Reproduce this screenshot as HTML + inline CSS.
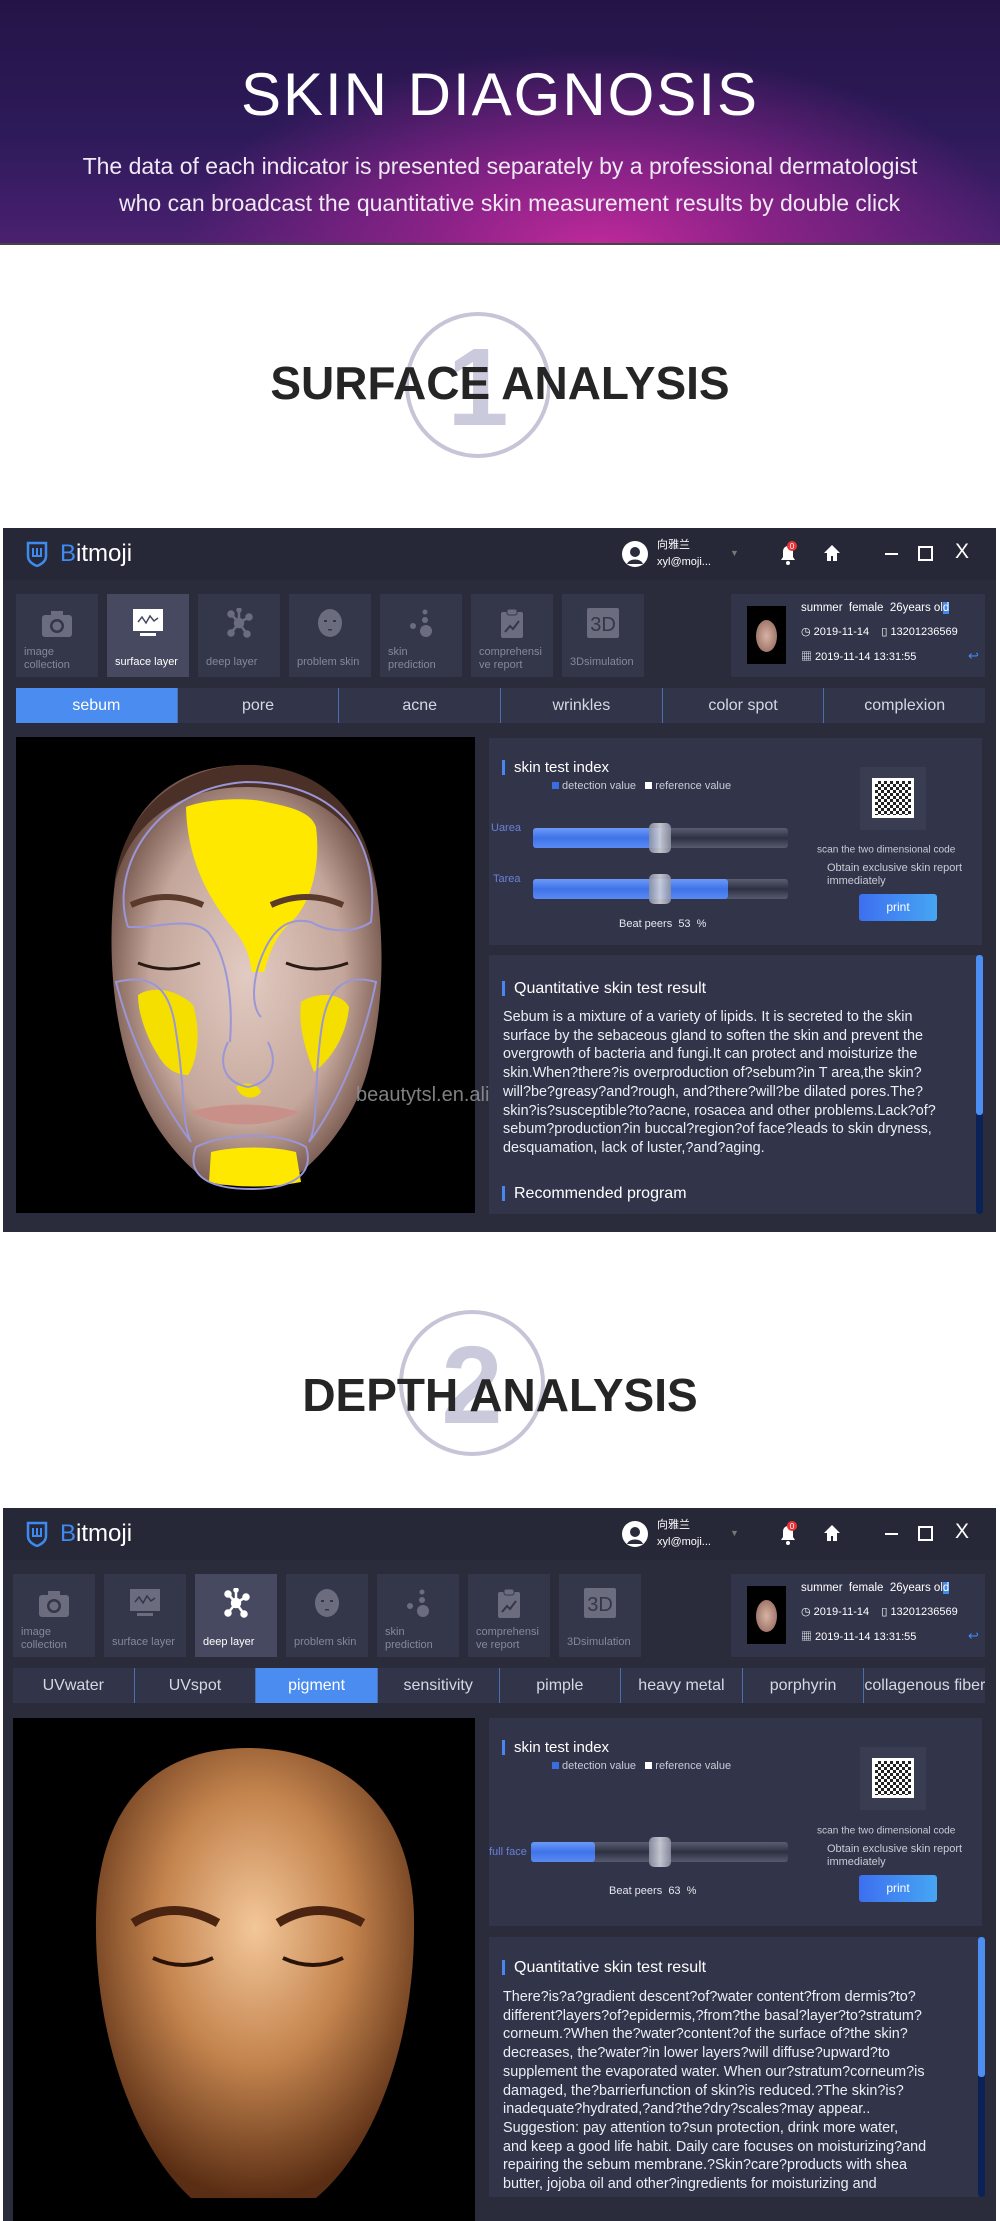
<!DOCTYPE html>
<html><head><meta charset="utf-8">
<style>
*{margin:0;padding:0;box-sizing:border-box}
body{width:1000px;height:2221px;background:#fff;font-family:"Liberation Sans","Noto Sans CJK SC",sans-serif;position:relative;overflow:hidden}
.abs{position:absolute}
.banner{left:0;top:0;width:1000px;height:245px;background:radial-gradient(ellipse 420px 200px at 600px 250px,#c02a9a 0%,#8a2288 40%,rgba(60,25,110,0) 100%),linear-gradient(180deg,#241446 0%,#2d1a5a 55%,#4a2070 100%);border-bottom:2px solid #444}
.banner h1{position:absolute;left:0;width:1000px;top:60px;text-align:center;color:#fff;font-weight:normal;font-size:60px;letter-spacing:2px}
.banner p{position:absolute;left:0;width:1000px;text-align:center;color:#f0e8f4;font-size:23px}
.sec{font-size:46px;font-weight:bold;color:#252525;letter-spacing:0px;width:1000px;text-align:center;left:0}
.app{left:3px;width:993px;background:#2a2c3c;overflow:hidden}
.tb{left:0;top:0;width:993px;height:52px;background:#262837}
.tile{width:82px;height:83px;top:66px;background:#34364a;color:#85879a;font-size:11px}
.tile.on{background:#46495f;color:#fff}
.tile .lb{position:absolute;left:8px;bottom:5px;line-height:13px}
.tile svg{position:absolute;left:25px;top:14px}
.tabs{top:160px;left:13px;width:969px;height:35px;background:#32354a;display:flex}
.tabs div{flex:1;color:#d5d7e2;font-size:16px;text-align:center;line-height:35px;border-left:1px solid #4a6fb0;white-space:nowrap;overflow:hidden}
.tabs div:first-child{border-left:none}
.tabs div.on{background:#4a8cef;color:#fff}
.pan{background:#32344a}
.hd{font-size:15px;color:#fff;border-left:3px solid #4a86f0;padding-left:9px;line-height:15px}
.bar{height:20px;border-radius:3px;background:linear-gradient(180deg,#5a5e72,#2e3142 50%,#555a6e);}
.fill{height:20px;border-radius:3px;background:linear-gradient(180deg,#6d9af8,#3f73e8 50%,#5a8af2)}
.thumb{width:22px;height:30px;border-radius:5px;background:linear-gradient(90deg,#8c90a2,#d0d2dc 50%,#8c90a2);opacity:.9}
.small{color:#c9cbd6;font-size:11px}
.body{color:#eceef4;font-size:14.4px;line-height:18.7px;white-space:nowrap}
</style></head><body>

<div class="abs banner">
<h1>SKIN DIAGNOSIS</h1>
<p style="top:153px">The data of each indicator is presented separately by a professional dermatologist</p>
<p style="top:190px">&nbsp;&nbsp;&nbsp;who can broadcast the quantitative skin measurement results by double click</p>
</div>

<svg class="abs" style="left:400px;top:310px" width="150" height="150"><circle cx="78" cy="75" r="71" fill="none" stroke="#c6c4d6" stroke-width="4"/><text x="78" y="115" text-anchor="middle" font-size="110" font-weight="bold" fill="#cbc9dc" font-family="Liberation Sans">1</text></svg>
<div class="abs sec" style="top:356px">SURFACE ANALYSIS</div>

<svg class="abs" style="left:397px;top:1310px" width="150" height="150"><circle cx="75" cy="73" r="71" fill="none" stroke="#c6c4d6" stroke-width="4"/><text x="75" y="113" text-anchor="middle" font-size="110" font-weight="bold" fill="#cbc9dc" font-family="Liberation Sans">2</text></svg>
<div class="abs sec" style="top:1368px">DEPTH ANALYSIS</div>

<!-- APP 1 -->
<div class="abs app" style="top:528px;height:704px">
 <div class="abs tb">
  <svg class="abs" style="left:22px;top:13px" width="24" height="26"><path d="M3 2h18v13c0 5-4 8-9 10-5-2-9-5-9-10z" fill="none" stroke="#3d8bf0" stroke-width="2.5"/><path d="M8 7v8h8V7M12 7v8" fill="none" stroke="#3d8bf0" stroke-width="2"/></svg>
  <div class="abs" style="left:57px;top:12px;font-size:24px;color:#fff"><span style="color:#3d8bf0">B</span>itmoji</div>
  <svg class="abs" style="left:619px;top:13px" width="26" height="26"><circle cx="13" cy="13" r="13" fill="#fff"/><circle cx="13" cy="11" r="5" fill="#2a2c3c"/><path d="M5 23c2-6 14-6 16 0z" fill="#2a2c3c"/></svg>
  <div class="abs" style="left:654px;top:9px;font-size:11px;color:#fff;line-height:17px">向雅兰<br>xyl@moji...</div>
  <div class="abs" style="left:727px;top:20px;color:#777;font-size:9px">▼</div>
  <svg class="abs" style="left:775px;top:12px" width="20" height="26"><path d="M3 20h14l-2-3V11a5 5 0 0 0-10 0v6z" fill="#fff"/><circle cx="10" cy="23" r="2" fill="#fff"/><circle cx="14" cy="6" r="5" fill="#e33"/><text x="14" y="9" font-size="8" fill="#fff" text-anchor="middle">0</text></svg>
  <svg class="abs" style="left:820px;top:16px" width="18" height="18"><path d="M9 1L1 9h3v8h4v-5h2v5h4V9h3z" fill="#fff"/></svg>
  <div class="abs" style="left:882px;top:25px;width:13px;height:2px;background:#fff"></div>
  <div class="abs" style="left:915px;top:18px;width:15px;height:15px;border:2px solid #fff"></div>
  <div class="abs" style="left:952px;top:12px;color:#fff;font-size:21px">X</div>
 </div>
 <div class="abs tile" style="left:13px"><svg width="32" height="30"><rect x="1" y="7" width="30" height="22" rx="3" fill="#6b6d7e"/><rect x="10" y="3" width="12" height="6" fill="#6b6d7e"/><circle cx="16" cy="18" r="7" fill="#34364a"/><circle cx="16" cy="18" r="4.5" fill="#6b6d7e"/></svg><div class="lb">image<br>collection</div></div>
 <div class="abs tile on" style="left:104px"><svg width="32" height="30"><rect x="1" y="1" width="30" height="22" fill="#fff"/><path d="M6 14l4-5 4 6 4-7 4 5 4-3" stroke="#46495f" stroke-width="1.5" fill="none"/><rect x="8" y="25" width="16" height="3" fill="#fff"/></svg><div class="lb" style="bottom:8px">surface layer</div></div>
 <div class="abs tile" style="left:195px"><svg width="32" height="30"><g fill="#6b6d7e" stroke="#6b6d7e" stroke-width="2.5"><line x1="16" y1="15" x2="8" y2="6"/><line x1="16" y1="15" x2="26" y2="9"/><line x1="16" y1="15" x2="8" y2="25"/><line x1="16" y1="15" x2="24" y2="26"/><line x1="16" y1="15" x2="16" y2="2"/><circle cx="16" cy="15" r="4"/><circle cx="8" cy="6" r="2.5"/><circle cx="26" cy="9" r="2.5"/><circle cx="8" cy="25" r="2.5"/><circle cx="24" cy="26" r="2.5"/><circle cx="16" cy="2" r="1.5"/></g></svg><div class="lb" style="bottom:8px">deep layer</div></div>
 <div class="abs tile" style="left:286px"><svg width="32" height="30"><ellipse cx="16" cy="15" rx="12" ry="14" fill="#6b6d7e"/><rect x="10" y="12" width="3" height="2" fill="#34364a"/><rect x="19" y="12" width="3" height="2" fill="#34364a"/><rect x="14" y="21" width="4" height="1.5" fill="#34364a"/></svg><div class="lb" style="bottom:8px">problem skin</div></div>
 <div class="abs tile" style="left:377px"><svg width="32" height="30"><circle cx="20" cy="4" r="2.5" fill="#6b6d7e"/><circle cx="20" cy="12" r="3" fill="#6b6d7e"/><circle cx="8" cy="18" r="3" fill="#6b6d7e"/><circle cx="21" cy="23" r="6" fill="#6b6d7e"/></svg><div class="lb">skin<br>prediction</div></div>
 <div class="abs tile" style="left:468px"><svg width="32" height="30"><rect x="5" y="4" width="22" height="26" rx="2" fill="#6b6d7e"/><rect x="11" y="1" width="10" height="6" rx="2" fill="#6b6d7e" stroke="#34364a"/><path d="M9 24l5-6 3 3 6-8" stroke="#34364a" stroke-width="2" fill="none"/></svg><div class="lb">comprehensi<br>ve report</div></div>
 <div class="abs tile" style="left:559px"><svg width="32" height="30"><rect x="0" y="0" width="32" height="30" rx="2" fill="#6b6d7e"/><text x="16" y="23" font-size="20" fill="#34364a" text-anchor="middle" font-family="Liberation Sans">3D</text></svg><div class="lb" style="bottom:8px">3Dsimulation</div></div>
 <div class="abs" style="left:728px;top:66px;width:254px;height:83px;background:#32344a">
  <div class="abs" style="left:16px;top:12px;width:39px;height:58px;background:#000"><div style="margin:14px 9px;width:21px;height:32px;border-radius:50%;background:radial-gradient(#d7b3a5,#8a6054)"></div></div>
  <div class="abs small" style="left:70px;top:8px;color:#fff;font-size:11.5px;white-space:nowrap">summer &nbsp;female &nbsp;26years ol<span style="background:#3d8bf0">d</span></div>
  <div class="abs small" style="left:70px;top:31px;color:#fff;white-space:nowrap">◷ 2019-11-14 &nbsp;&nbsp;&nbsp;▯ 13201236569</div>
  <div class="abs small" style="left:70px;top:54px;color:#fff;white-space:nowrap">▦ 2019-11-14 13:31:55</div>
  <div class="abs" style="left:237px;top:54px;color:#3d8bf0;font-size:13px">↩</div>
 </div>
 <div class="abs tabs"><div class="on">sebum</div><div>pore</div><div>acne</div><div>wrinkles</div><div>color spot</div><div>complexion</div></div>
 <svg class="abs" style="left:13px;top:209px" width="459" height="476" viewBox="0 0 459 476">
  <rect width="459" height="476" fill="#000"/>
  <defs><radialGradient id="sk1" cx="50%" cy="50%" r="55%"><stop offset="0" stop-color="#e2cbc2"/><stop offset=".65" stop-color="#c4a69b"/><stop offset="1" stop-color="#6a4c42"/></radialGradient></defs>
  <path d="M230 28c-75 0-122 45-132 125-6 60-2 130 20 190 20 55 55 90 80 105h70c30-20 70-60 85-120 15-60 15-120 8-175C350 75 305 28 230 28z" fill="url(#sk1)"/>
  <path d="M98 150c8-80 70-122 132-122 75 0 120 45 130 122-10-60-60-100-130-100s-120 40-132 100z" fill="#4a3026"/>
  <path d="M170 70c20-8 60-10 80-5 25 5 45 10 50 25 5 40-5 80-30 100-12 12-18 30-22 45h-12c-3-20-8-30-20-45-25-30-45-70-46-120z" fill="#ffe800"/>
  <path d="M122 258c15-10 40-5 55 10 8 25 5 55-5 70-10 0-22-5-30-20-10-15-20-40-20-60zM285 265c15-10 40-10 48 5-2 25-15 50-35 65-8-20-16-45-13-70z" fill="#f5df00"/>
  <path d="M220 350c8-6 22-4 25 5-5 8-20 8-25-5z" fill="#f5df00"/>
  <path d="M195 415c25-6 60-6 85 0l5 30c-30 6-65 6-92 0z" fill="#ffe800"/>
  <path d="M112 190c-20-60 30-140 118-145 85 0 135 50 125 140-15 10-40 12-60 0-20-5-35 5-45 25-15 30-15 60-5 70M112 190c30 2 60-12 80 5 20 25 25 70 22 110M100 245c40-10 55 10 60 50 10 60 5 90 15 110-30-40-60-100-75-160zM360 245c-35-10-50 10-55 50-8 60-2 90-12 110 30-40 55-100 67-160zM212 305c-10 20-5 40 20 45 25-5 30-25 20-45M180 410c30-15 85-15 110 0 8 25-10 42-55 42-45 0-65-15-55-42z" fill="none" stroke="#9a96d8" stroke-width="2"/>
  <path d="M115 168q35-16 72 0M255 168q35-16 72 0" stroke="#5a3a2a" stroke-width="6" fill="none"/>
  <path d="M122 226q30 12 62 0M270 226q30 12 62 0" stroke="#2a1a14" stroke-width="3" fill="none"/>
  <path d="M172 375q55-15 112 0q-55 25-112 0z" fill="#c9908a"/>
 </svg>
 <div class="abs" style="left:353px;top:556px;color:#8e8e92;font-size:20px;white-space:nowrap;opacity:.9">beautytsl.en.alibaba.com</div>
 <div class="abs pan" style="left:486px;top:210px;width:493px;height:207px">
  <div class="abs hd" style="left:13px;top:22px">skin test index</div>
  <div class="abs small" style="left:63px;top:42px;white-space:nowrap"><span style="display:inline-block;width:7px;height:7px;background:#3a6ee0"></span> detection value &nbsp; <span style="display:inline-block;width:7px;height:7px;background:#fff"></span> reference value</div>
  <div class="abs" style="left:2px;top:84px;color:#6a80d8;font-size:11px">Uarea</div>
  <div class="abs bar" style="left:44px;top:90px;width:255px"></div><div class="abs fill" style="left:44px;top:90px;width:128px"></div><div class="abs thumb" style="left:160px;top:85px"></div>
  <div class="abs" style="left:4px;top:135px;color:#6a80d8;font-size:11px">Tarea</div>
  <div class="abs bar" style="left:44px;top:141px;width:255px"></div><div class="abs fill" style="left:44px;top:141px;width:195px"></div><div class="abs thumb" style="left:160px;top:136px"></div>
  <div class="abs small" style="left:130px;top:180px;color:#e5e6ee">Beat peers &nbsp;53 &nbsp;%</div>
  <div class="abs" style="left:371px;top:29px;width:66px;height:63px;background:#3a3c52"><div style="margin:11px 12px;width:42px;height:40px;background:repeating-conic-gradient(#222 0 25%,#fff 0 50%) 0 0/6px 6px;border:3px solid #fff"></div></div>
  <div class="abs small" style="top:106px;transform:scale(.92);transform-origin:0 0;left:328px;white-space:nowrap">scan the two dimensional code</div>
  <div class="abs small" style="left:338px;top:124px;line-height:13px">Obtain exclusive skin report<br>immediately</div>
  <div class="abs" style="left:370px;top:156px;width:78px;height:27px;border-radius:3px;background:linear-gradient(90deg,#3d6ff0,#46a6f3);color:#fff;font-size:12px;text-align:center;line-height:27px">print</div>
 </div>
 <div class="abs pan" style="left:486px;top:427px;width:493px;height:259px">
  <div class="abs hd" style="left:13px;top:26px;font-size:16px">Quantitative skin test result</div>
  <div class="abs body" style="left:14px;top:53px">Sebum is a mixture of a variety of lipids. It is secreted to the skin<br>surface by the sebaceous gland to soften the skin and prevent the<br>overgrowth of bacteria and fungi.It can protect and moisturize the<br>skin.When?there?is overproduction of?sebum?in T area,the skin?<br>will?be?greasy?and?rough, and?there?will?be dilated pores.The?<br>skin?is?susceptible?to?acne, rosacea and other problems.Lack?of?<br>sebum?production?in buccal?region?of face?leads to skin dryness,<br>desquamation, lack of luster,?and?aging.</div>
  <div class="abs hd" style="left:13px;top:231px;font-size:16px">Recommended program</div>
  <div class="abs" style="left:487px;top:0;width:7px;height:259px;background:#0b2256;border-radius:3px"></div>
  <div class="abs" style="left:487px;top:0;width:7px;height:160px;background:#4d8ef2;border-radius:3px"></div>
 </div>
</div>

<!-- APP 2 -->
<div class="abs app" style="top:1508px;height:713px">
 <div class="abs tb">
  <svg class="abs" style="left:22px;top:13px" width="24" height="26"><path d="M3 2h18v13c0 5-4 8-9 10-5-2-9-5-9-10z" fill="none" stroke="#3d8bf0" stroke-width="2.5"/><path d="M8 7v8h8V7M12 7v8" fill="none" stroke="#3d8bf0" stroke-width="2"/></svg>
  <div class="abs" style="left:57px;top:12px;font-size:24px;color:#fff"><span style="color:#3d8bf0">B</span>itmoji</div>
  <svg class="abs" style="left:619px;top:13px" width="26" height="26"><circle cx="13" cy="13" r="13" fill="#fff"/><circle cx="13" cy="11" r="5" fill="#2a2c3c"/><path d="M5 23c2-6 14-6 16 0z" fill="#2a2c3c"/></svg>
  <div class="abs" style="left:654px;top:9px;font-size:11px;color:#fff;line-height:17px">向雅兰<br>xyl@moji...</div>
  <div class="abs" style="left:727px;top:20px;color:#777;font-size:9px">▼</div>
  <svg class="abs" style="left:775px;top:12px" width="20" height="26"><path d="M3 20h14l-2-3V11a5 5 0 0 0-10 0v6z" fill="#fff"/><circle cx="10" cy="23" r="2" fill="#fff"/><circle cx="14" cy="6" r="5" fill="#e33"/><text x="14" y="9" font-size="8" fill="#fff" text-anchor="middle">0</text></svg>
  <svg class="abs" style="left:820px;top:16px" width="18" height="18"><path d="M9 1L1 9h3v8h4v-5h2v5h4V9h3z" fill="#fff"/></svg>
  <div class="abs" style="left:882px;top:25px;width:13px;height:2px;background:#fff"></div>
  <div class="abs" style="left:915px;top:18px;width:15px;height:15px;border:2px solid #fff"></div>
  <div class="abs" style="left:952px;top:12px;color:#fff;font-size:21px">X</div>
 </div>
 <div class="abs tile" style="left:10px"><svg width="32" height="30"><rect x="1" y="7" width="30" height="22" rx="3" fill="#6b6d7e"/><rect x="10" y="3" width="12" height="6" fill="#6b6d7e"/><circle cx="16" cy="18" r="7" fill="#34364a"/><circle cx="16" cy="18" r="4.5" fill="#6b6d7e"/></svg><div class="lb">image<br>collection</div></div>
 <div class="abs tile" style="left:101px"><svg width="32" height="30"><rect x="1" y="1" width="30" height="22" fill="#6b6d7e"/><path d="M6 14l4-5 4 6 4-7 4 5 4-3" stroke="#34364a" stroke-width="1.5" fill="none"/><rect x="8" y="25" width="16" height="3" fill="#6b6d7e"/></svg><div class="lb" style="bottom:8px">surface layer</div></div>
 <div class="abs tile on" style="left:192px"><svg width="32" height="30"><g fill="#fff" stroke="#fff" stroke-width="2.5"><line x1="16" y1="15" x2="8" y2="6"/><line x1="16" y1="15" x2="26" y2="9"/><line x1="16" y1="15" x2="8" y2="25"/><line x1="16" y1="15" x2="24" y2="26"/><line x1="16" y1="15" x2="16" y2="2"/><circle cx="16" cy="15" r="4"/><circle cx="8" cy="6" r="2.5"/><circle cx="26" cy="9" r="2.5"/><circle cx="8" cy="25" r="2.5"/><circle cx="24" cy="26" r="2.5"/><circle cx="16" cy="2" r="1.5"/></g></svg><div class="lb" style="bottom:8px">deep layer</div></div>
 <div class="abs tile" style="left:283px"><svg width="32" height="30"><ellipse cx="16" cy="15" rx="12" ry="14" fill="#6b6d7e"/><rect x="10" y="12" width="3" height="2" fill="#34364a"/><rect x="19" y="12" width="3" height="2" fill="#34364a"/><rect x="14" y="21" width="4" height="1.5" fill="#34364a"/></svg><div class="lb" style="bottom:8px">problem skin</div></div>
 <div class="abs tile" style="left:374px"><svg width="32" height="30"><circle cx="20" cy="4" r="2.5" fill="#6b6d7e"/><circle cx="20" cy="12" r="3" fill="#6b6d7e"/><circle cx="8" cy="18" r="3" fill="#6b6d7e"/><circle cx="21" cy="23" r="6" fill="#6b6d7e"/></svg><div class="lb">skin<br>prediction</div></div>
 <div class="abs tile" style="left:465px"><svg width="32" height="30"><rect x="5" y="4" width="22" height="26" rx="2" fill="#6b6d7e"/><rect x="11" y="1" width="10" height="6" rx="2" fill="#6b6d7e" stroke="#34364a"/><path d="M9 24l5-6 3 3 6-8" stroke="#34364a" stroke-width="2" fill="none"/></svg><div class="lb">comprehensi<br>ve report</div></div>
 <div class="abs tile" style="left:556px"><svg width="32" height="30"><rect x="0" y="0" width="32" height="30" rx="2" fill="#6b6d7e"/><text x="16" y="23" font-size="20" fill="#34364a" text-anchor="middle" font-family="Liberation Sans">3D</text></svg><div class="lb" style="bottom:8px">3Dsimulation</div></div>
 <div class="abs" style="left:728px;top:66px;width:254px;height:83px;background:#32344a">
  <div class="abs" style="left:16px;top:12px;width:39px;height:58px;background:#000"><div style="margin:14px 9px;width:21px;height:32px;border-radius:50%;background:radial-gradient(#d7b3a5,#8a6054)"></div></div>
  <div class="abs small" style="left:70px;top:8px;color:#fff;font-size:11.5px;white-space:nowrap">summer &nbsp;female &nbsp;26years ol<span style="background:#3d8bf0">d</span></div>
  <div class="abs small" style="left:70px;top:31px;color:#fff;white-space:nowrap">◷ 2019-11-14 &nbsp;&nbsp;&nbsp;▯ 13201236569</div>
  <div class="abs small" style="left:70px;top:54px;color:#fff;white-space:nowrap">▦ 2019-11-14 13:31:55</div>
  <div class="abs" style="left:237px;top:54px;color:#3d8bf0;font-size:13px">↩</div>
 </div>
 <div class="abs tabs" style="left:10px;width:972px"><div>UVwater</div><div>UVspot</div><div class="on">pigment</div><div>sensitivity</div><div>pimple</div><div>heavy metal</div><div>porphyrin</div><div style="text-align:left">collagenous fiber</div></div>
 <svg class="abs" style="left:10px;top:210px" width="462" height="503" viewBox="0 0 462 503">
  <rect width="462" height="503" fill="#000"/>
  <defs><radialGradient id="sk2" cx="50%" cy="40%" r="60%"><stop offset="0" stop-color="#f3c79a"/><stop offset=".5" stop-color="#c4844e"/><stop offset="1" stop-color="#5a2e14"/></radialGradient></defs>
  <path d="M235 30c-95 0-150 60-152 170-2 120 40 230 95 280h125c60-50 100-160 98-280C400 90 330 30 235 30z" fill="url(#sk2)"/>
  <path d="M120 205q40-25 85 0M265 205q40-25 85 0" stroke="#4a2410" stroke-width="9" fill="none"/>
  <path d="M140 240q30 14 60 0M270 240q30 14 60 0" stroke="#2a1206" stroke-width="4" fill="none"/>
 </svg>
 <div class="abs pan" style="left:486px;top:210px;width:493px;height:208px">
  <div class="abs hd" style="left:13px;top:22px">skin test index</div>
  <div class="abs small" style="left:63px;top:42px;white-space:nowrap"><span style="display:inline-block;width:7px;height:7px;background:#3a6ee0"></span> detection value &nbsp; <span style="display:inline-block;width:7px;height:7px;background:#fff"></span> reference value</div>
  <div class="abs" style="left:0px;top:128px;color:#6a80d8;font-size:11px">full face</div>
  <div class="abs bar" style="left:42px;top:124px;width:257px"></div><div class="abs fill" style="left:42px;top:124px;width:64px"></div><div class="abs thumb" style="left:160px;top:119px"></div>
  <div class="abs small" style="left:120px;top:167px;color:#e5e6ee">Beat peers &nbsp;63 &nbsp;%</div>
  <div class="abs" style="left:371px;top:29px;width:66px;height:63px;background:#3a3c52"><div style="margin:11px 12px;width:42px;height:40px;background:repeating-conic-gradient(#222 0 25%,#fff 0 50%) 0 0/6px 6px;border:3px solid #fff"></div></div>
  <div class="abs small" style="top:107px;transform:scale(.92);transform-origin:0 0;left:328px;white-space:nowrap">scan the two dimensional code</div>
  <div class="abs small" style="left:338px;top:125px;line-height:13px">Obtain exclusive skin report<br>immediately</div>
  <div class="abs" style="left:370px;top:157px;width:78px;height:27px;border-radius:3px;background:linear-gradient(90deg,#3d6ff0,#46a6f3);color:#fff;font-size:12px;text-align:center;line-height:27px">print</div>
 </div>
 <div class="abs pan" style="left:486px;top:429px;width:493px;height:260px">
  <div class="abs hd" style="left:13px;top:23px;font-size:16px">Quantitative skin test result</div>
  <div class="abs body" style="left:14px;top:51px">There?is?a?gradient descent?of?water content?from dermis?to?<br>different?layers?of?epidermis,?from?the basal?layer?to?stratum?<br>corneum.?When the?water?content?of the surface of?the skin?<br>decreases, the?water?in lower layers?will diffuse?upward?to<br>supplement the evaporated water. When our?stratum?corneum?is<br>damaged, the?barrierfunction of skin?is reduced.?The skin?is?<br>inadequate?hydrated,?and?the?dry?scales?may appear..<br>Suggestion: pay attention to?sun protection, drink more water,<br>and keep a good life habit. Daily care focuses on moisturizing?and<br>repairing the sebum membrane.?Skin?care?products with shea<br>butter, jojoba oil and other?ingredients for moisturizing and</div>
  <div class="abs" style="left:489px;top:0;width:7px;height:260px;background:#0b2256;border-radius:3px"></div>
  <div class="abs" style="left:489px;top:0;width:7px;height:140px;background:#4d8ef2;border-radius:3px"></div>
 </div>
</div>
</body></html>
